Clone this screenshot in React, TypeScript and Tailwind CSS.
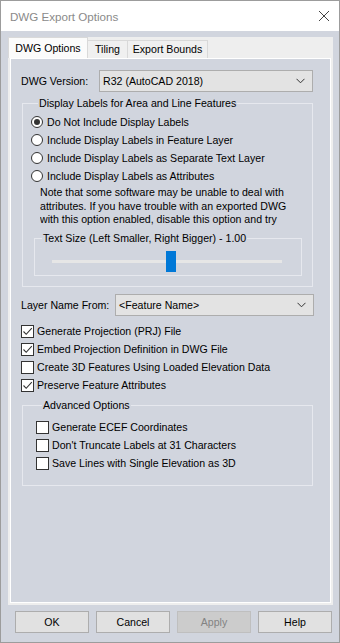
import React from 'react';

const font = { fontFamily: '"Liberation Sans", Arial, sans-serif' };

function Radio({ checked, label }: { checked?: boolean; label: string }) {
  return (
    <div className="flex h-[18px] items-center">
      <span className="flex h-[12px] w-[12px] items-center justify-center rounded-full border border-[#333] bg-white">
        {checked && <span className="h-[6px] w-[6px] rounded-full bg-[#333]" />}
      </span>
      <span className="ml-[4px] whitespace-nowrap">{label}</span>
    </div>
  );
}

function Check({ checked, label }: { checked?: boolean; label: string }) {
  return (
    <div className="flex h-[18px] items-center">
      <span className="flex h-[13px] w-[13px] items-center justify-center border border-[#333] bg-white">
        {checked && (
          <svg width="11" height="11" viewBox="0 0 11 11">
            <path d="M1.5 5.5 L4.2 8.3 L9.8 2.2" fill="none" stroke="#333" strokeWidth="1.1" />
          </svg>
        )}
      </span>
      <span className="ml-[3px] whitespace-nowrap">{label}</span>
    </div>
  );
}

function Select({ value, className }: { value: string; className: string }) {
  return (
    <div
      className={`flex h-[22px] items-center justify-between border border-[#adadad] bg-[#e3e3e3] pl-[3px] pr-[7px] ${className}`}
    >
      <span>{value}</span>
      <svg width="9" height="6" viewBox="0 0 9 6">
        <path d="M0.5 0.8 L4.5 4.8 L8.5 0.8" fill="none" stroke="#333" strokeWidth="1" />
      </svg>
    </div>
  );
}

function Button({ label, disabled }: { label: string; disabled?: boolean }) {
  return (
    <div
      className={`flex h-[22px] w-[74px] items-center justify-center border ${
        disabled ? 'border-[#bfbfbf] bg-[#cccccc] text-[#838383]' : 'border-[#adadad] bg-[#e1e1e1] text-black'
      }`}
    >
      {label}
    </div>
  );
}

export default function App() {
  return (
    <div
      style={font}
      className="flex h-[643px] w-[340px] flex-col border border-[#9c9c9c] bg-[#d1d5de] text-[10.6px] leading-[13px] text-black"
    >
      {/* title bar */}
      <div className="flex h-[30px] items-center justify-between bg-white pl-[9px] pr-[9px]">
        <span className="text-[11.6px] text-[#8a8a8a]">DWG Export Options</span>
        <svg width="12" height="12" viewBox="0 0 12 12">
          <path d="M1 1 L11 11 M11 1 L1 11" stroke="#444" strokeWidth="1" />
        </svg>
      </div>

      {/* tab control */}
      <div className="ml-[7px] mr-[6px] mt-[6px] flex h-[568px] flex-col bg-[#eeeeee]">
        <div className="flex h-[21px] items-end">
          <div className="flex h-[21px] w-[80px] items-center justify-center border border-b-0 border-[#d9d9d9] bg-[#fbfbfb]">
            DWG Options
          </div>
          <div className="flex h-[18px] w-[40px] items-center justify-center border border-b-0 border-l-0 border-[#d9d9d9] bg-[#f0f0f0]">
            Tiling
          </div>
          <div className="flex h-[18px] w-[80px] items-center justify-center border border-b-0 border-l-0 border-[#d9d9d9] bg-[#f0f0f0]">
            Export Bounds
          </div>
        </div>
        <div className="flex flex-1 px-[2px] pb-[2px]">
          <div className="flex flex-1 flex-col border border-white bg-[#d1d5de] pl-[10px] pr-[17px] pt-[11px]">
            <div className="flex items-center">
              <span className="w-[78px]">DWG Version:</span>
              <Select value="R32 (AutoCAD 2018)" className="flex-1" />
            </div>

            <fieldset className="ml-[1px] mt-[5px] h-[190px] border border-[#e6e8ee] pl-[8px] pr-[8px]">
              <legend className="ml-[7px] px-[1px] leading-[13px]">Display Labels for Area and Line Features</legend>
              <div className="pt-[3px]">
                <Radio checked label="Do Not Include Display Labels" />
                <Radio label="Include Display Labels in Feature Layer" />
                <Radio label="Include Display Labels as Separate Text Layer" />
                <Radio label="Include Display Labels as Attributes" />
              </div>
              <div className="ml-[9px] mt-[1px] h-[41px] overflow-hidden whitespace-nowrap leading-[13.6px]">
                <div>Note that some software may be unable to deal with</div>
                <div>attributes. If you have trouble with an exported DWG</div>
                <div>with this option enabled, disable this option and try</div>
              </div>
              <fieldset className="ml-[3px] mr-[2px] mt-[5px] border border-[#e6e8ee]">
                <legend className="ml-[7px] px-[1px] leading-[13px]">Text Size (Left Smaller, Right Bigger) - 1.00</legend>
                <div className="relative mb-[3px] ml-[17px] mr-[19px] mt-[6px] flex h-[21px] items-center">
                  <div className="h-[3px] flex-1 bg-[#e6e6e6]" />
                  <div className="absolute left-[114px] top-0 h-[21px] w-[10px] bg-[#0078d7]" />
                </div>
              </fieldset>
            </fieldset>

            <div className="mt-[7px] flex items-center">
              <span className="w-[94px] whitespace-nowrap">Layer Name From:</span>
              <Select value="<Feature Name>" className="-mr-[1px] flex-1" />
            </div>

            <div className="mt-[6px]">
              <Check checked label="Generate Projection (PRJ) File" />
              <Check checked label="Embed Projection Definition in DWG File" />
              <Check label="Create 3D Features Using Loaded Elevation Data" />
              <Check checked label="Preserve Feature Attributes" />
            </div>

            <fieldset className="ml-[1px] mt-[5px] h-[87px] border border-[#e6e8ee] pl-[13px]">
              <legend className="ml-[6px] px-[1px] leading-[13px]">Advanced Options</legend>
              <div className="pt-[6px]">
                <Check label="Generate ECEF Coordinates" />
                <Check label="Don't Truncate Labels at 31 Characters" />
                <Check label="Save Lines with Single Elevation as 3D" />
              </div>
            </fieldset>
          </div>
        </div>
      </div>

      {/* buttons */}
      <div className="ml-[14px] mt-[6px] flex gap-[7px]">
        <Button label="OK" />
        <Button label="Cancel" />
        <Button label="Apply" disabled />
        <Button label="Help" />
      </div>
    </div>
  );
}
